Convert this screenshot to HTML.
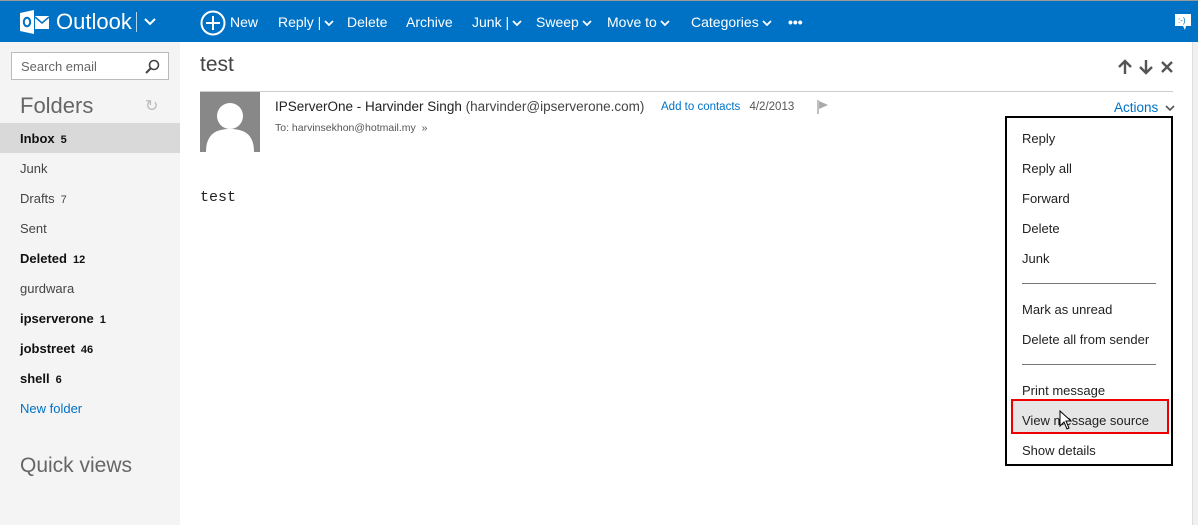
<!DOCTYPE html>
<html><head><style>
*{margin:0;padding:0;box-sizing:border-box}
body{width:1198px;height:525px;overflow:hidden;background:#fff;font-family:"Liberation Sans",sans-serif;position:relative;color:#333}
.top{position:absolute;left:0;top:0;width:1198px;height:42px;background:#0072c6;border-top:1px solid #999}
.t{position:absolute;top:13px;color:#fff;font-size:14px;white-space:nowrap}
.cv{display:inline-block;vertical-align:middle;margin-left:3px}
.side{position:absolute;left:0;top:42px;width:180px;height:483px;background:#f4f4f4}
.f{position:absolute;left:20px;font-size:13px;color:#444;white-space:nowrap}
.f b{color:#111}
.f small{font-size:11px;font-weight:bold;color:#111;margin-left:6px}
.a{position:absolute;font-size:13px;white-space:nowrap}
.menu{position:absolute;left:1005px;top:116px;width:168px;height:350px;border:2px solid #000;background:#fff}
.mi{position:absolute;left:15px;font-size:13px;color:#222;white-space:nowrap}
.sep{position:absolute;left:15px;width:134px;height:1px;background:#777}
</style></head><body>
<div class="top">
  <svg style="position:absolute;left:20px;top:9px" width="30" height="24" viewBox="0 0 30 24"><path d="M0 3L14 0V24L0 21Z" fill="#fff"/><ellipse cx="7" cy="12" rx="3.2" ry="4.2" fill="none" stroke="#0072c6" stroke-width="2"/><path d="M15 6H29V19H15Z" fill="#fff"/><path d="M15 7L22 13L29 7" fill="none" stroke="#0072c6" stroke-width="1.5"/></svg>
  <div class="t" style="left:56px;top:8px;font-size:22px;font-weight:300">Outlook</div>
  <div style="position:absolute;left:136px;top:11px;width:1px;height:20px;background:#fff;opacity:.7"></div>
  <svg style="position:absolute;left:144px;top:17px" width="12" height="8"><path d="M1 1L6 6L11 1" fill="none" stroke="#fff" stroke-width="2"/></svg>
  <svg style="position:absolute;left:200px;top:9px" width="26" height="26"><circle cx="13" cy="13" r="11.5" fill="none" stroke="#fff" stroke-width="2"/><path d="M13 6V20M6 13H20" stroke="#fff" stroke-width="2"/></svg>
  <div class="t" style="left:230px">New</div>
  <div class="t" style="left:278px">Reply |<svg class="cv" width="10" height="7"><path d="M1 1L5 5L9 1" fill="none" stroke="#fff" stroke-width="1.8"/></svg></div>
  <div class="t" style="left:347px">Delete</div>
  <div class="t" style="left:406px">Archive</div>
  <div class="t" style="left:472px">Junk |<svg class="cv" width="10" height="7"><path d="M1 1L5 5L9 1" fill="none" stroke="#fff" stroke-width="1.8"/></svg></div>
  <div class="t" style="left:536px">Sweep<svg class="cv" width="10" height="7"><path d="M1 1L5 5L9 1" fill="none" stroke="#fff" stroke-width="1.8"/></svg></div>
  <div class="t" style="left:607px">Move to<svg class="cv" width="10" height="7"><path d="M1 1L5 5L9 1" fill="none" stroke="#fff" stroke-width="1.8"/></svg></div>
  <div class="t" style="left:691px">Categories<svg class="cv" width="10" height="7"><path d="M1 1L5 5L9 1" fill="none" stroke="#fff" stroke-width="1.8"/></svg></div>
  <div class="t" style="left:788px;font-weight:bold">•••</div>
  <svg style="position:absolute;left:1175px;top:13px" width="16" height="16"><path d="M0 0H16V12H11L10 16L8 12H0Z" fill="#fff"/><text x="3" y="9" font-size="8" fill="#0072c6" font-family="Liberation Sans">:-)</text></svg>
</div>
<div class="side">
  <div style="position:absolute;left:11px;top:10px;width:158px;height:28px;border:1px solid #bbb;background:#fff"></div>
  <div class="f" style="top:17px;left:21px;color:#666">Search email</div>
  <svg style="position:absolute;left:145px;top:17px" width="15" height="15"><circle cx="9" cy="6" r="4.5" fill="none" stroke="#444" stroke-width="1.6"/><path d="M6 9L1 14" stroke="#444" stroke-width="2"/></svg>
  <div class="f" style="top:51px;font-size:22px;color:#666;font-weight:300">Folders</div>
  <div class="f" style="top:54px;left:145px;color:#bbb;font-size:16px">&#8635;</div>
  <div style="position:absolute;left:0;top:81px;width:180px;height:30px;background:#d9d9d9"></div>
  <div class="f" style="top:89px"><b>Inbox</b><small>5</small></div>
  <div class="f" style="top:119px">Junk</div>
  <div class="f" style="top:149px">Drafts<small style="font-weight:normal;color:#444">7</small></div>
  <div class="f" style="top:179px">Sent</div>
  <div class="f" style="top:209px"><b>Deleted</b><small>12</small></div>
  <div class="f" style="top:239px">gurdwara</div>
  <div class="f" style="top:269px"><b>ipserverone</b><small>1</small></div>
  <div class="f" style="top:299px"><b>jobstreet</b><small>46</small></div>
  <div class="f" style="top:329px"><b>shell</b><small>6</small></div>
  <div class="f" style="top:359px;color:#0072c6">New folder</div>
  <div class="f" style="top:412px;font-size:21px;color:#666;font-weight:300">Quick views</div>
</div>
<div style="position:absolute;left:1192px;top:42px;width:6px;height:483px;background:#f0f0f0;border-left:1px solid #ddd"></div>
<div class="a" style="left:200px;top:53px;font-size:21px;color:#444;font-weight:300">test</div>
<svg style="position:absolute;left:1118px;top:59px" width="58" height="16"><path d="M7 15V2M1 8L7 2L13 8" fill="none" stroke="#555" stroke-width="2.4"/><path d="M28 1V14M22 8L28 14L34 8" fill="none" stroke="#555" stroke-width="2.4"/><path d="M44 3L54 13M54 3L44 13" stroke="#555" stroke-width="2.4"/></svg>
<div style="position:absolute;left:200px;top:91px;width:973px;height:1px;background:#ccc"></div>
<div style="position:absolute;left:200px;top:92px;width:60px;height:60px;background:#888;overflow:hidden">
  <svg width="60" height="60"><circle cx="30" cy="24" r="13" fill="#fff"/><path d="M6 60C6 42 16 37 30 37C44 37 54 42 54 60Z" fill="#fff"/></svg>
</div>
<div class="a" style="left:275px;top:99px;color:#222;font-size:13.5px">IPServerOne - Harvinder Singh <span style="color:#444">(harvinder@ipserverone.com)</span></div>
<div class="a" style="left:661px;top:101px;font-size:11.5px;color:#0072c6">Add to contacts <span style="color:#555;margin-left:6px">4/2/2013</span></div>
<svg style="position:absolute;left:817px;top:100px" width="12" height="14"><path d="M1 0V14" stroke="#aaa" stroke-width="1.5"/><path d="M2 1L11 5L2 9Z" fill="#aaa"/></svg>
<div class="a" style="left:275px;top:122px;font-size:10.5px;color:#555">To: harvinsekhon@hotmail.my &nbsp;&#187;</div>
<div class="a" style="left:1114px;top:100px;color:#0072c6;font-size:13.5px">Actions <svg class="cv" width="10" height="7"><path d="M1 1L5 5L9 1" fill="none" stroke="#555" stroke-width="1.6"/></svg></div>
<div class="a" style="left:200px;top:189px;font-family:'Liberation Mono',monospace;font-size:15px;color:#222">test</div>
<div class="menu">
  <div class="mi" style="top:13px">Reply</div>
  <div class="mi" style="top:43px">Reply all</div>
  <div class="mi" style="top:73px">Forward</div>
  <div class="mi" style="top:103px">Delete</div>
  <div class="mi" style="top:133px">Junk</div>
  <div class="sep" style="top:165px"></div>
  <div class="mi" style="top:184px">Mark as unread</div>
  <div class="mi" style="top:214px">Delete all from sender</div>
  <div class="sep" style="top:246px"></div>
  <div class="mi" style="top:265px">Print message</div>
  <div style="position:absolute;left:4px;top:281px;width:158px;height:35px;background:#e6e6e6;border:2px solid #e00"></div>
  <div class="mi" style="top:295px">View message source</div>
  <div class="mi" style="top:325px">Show details</div>
  <svg style="position:absolute;left:52px;top:292px" width="14" height="20"><path d="M1 1V16L5 12L8 19L10 18L7 11H12Z" fill="#fff" stroke="#000"/></svg>
</div>
</body></html>
